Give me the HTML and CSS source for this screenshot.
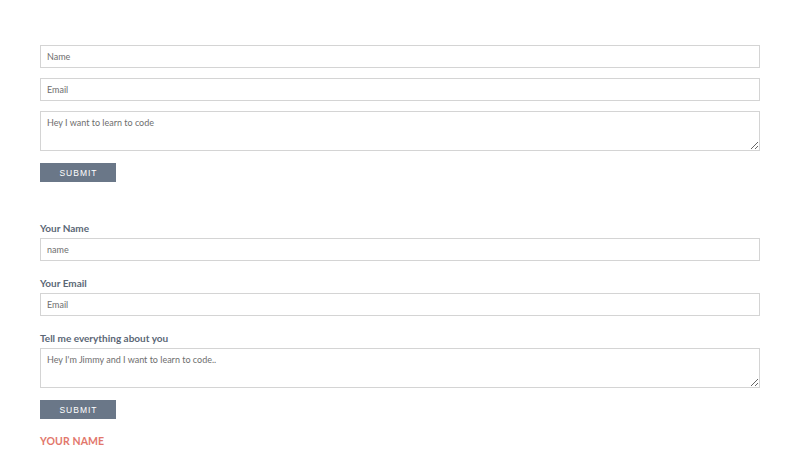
FILE: index.html
```html
<!DOCTYPE html>
<html>
<head>
<meta charset="utf-8">
<link rel="stylesheet" href="styles.css">
</head>
<body>
<div class="page">
  <form class="form form-simple">
    <input class="field" type="text" placeholder="Name">
    <input class="field" type="email" placeholder="Email">
    <textarea class="field area" placeholder="Hey I want to learn to code"></textarea>
    <button class="submit" type="button">SUBMIT</button>
  </form>

  <form class="form form-labeled">
    <div class="group">
      <label class="label">Your Name</label>
      <input class="field" type="text" placeholder="name">
    </div>
    <div class="group">
      <label class="label">Your Email</label>
      <input class="field" type="email" placeholder="Email">
    </div>
    <div class="group">
      <label class="label">Tell me everything about you</label>
      <textarea class="field area" placeholder="Hey I'm Jimmy and I want to learn to code.."></textarea>
    </div>
    <button class="submit" type="button">SUBMIT</button>
  </form>

  <h3 class="heading">YOUR NAME</h3>
</div>
</body>
</html>
```
FILE: styles.css
```css
* { box-sizing: border-box; }
html, body { margin: 0; padding: 0; background: #fff; }
body { font-family: Lato, "Open Sans", sans-serif; color: #5b6776; }
.page { padding: 45px 40px 0 40px; }
.form { display: flex; flex-direction: column; align-items: flex-start; }
.form-simple { gap: 10px; }
.form-simple .submit { margin-top: 2px; }
.form-labeled { margin-top: 39px; gap: 15px; }
.form-labeled .submit { margin-top: -3px; }
.group { display: flex; flex-direction: column; width: 100%; }
.label { font-size: 10px; font-weight: 700; line-height: 14px; margin-bottom: 3px; color: #5b6776; }
.field {
  width: 100%;
  height: 23px;
  border: 1px solid #d4d4d4;
  background: #fff;
  padding: 0 6px;
  font-family: Lato, sans-serif;
  font-size: 9px;
  color: #666;
  outline: none;
  margin: 0;
}
.field::placeholder { color: #6e6e6e; opacity: 1; }
.area { height: 40px; padding-top: 5px; resize: vertical; display: block; }
.submit {
  width: 76px;
  height: 19px;
  border: none;
  background: #6a7788;
  color: #fff;
  font-family: "Liberation Sans", Arial, sans-serif;
  font-size: 8.5px;
  letter-spacing: 1px;
  padding: 0 0 0 1px;
  margin: 0;
}
.heading {
  margin: 15px 0 0 0;
  font-size: 10.5px;
  font-weight: 700;
  line-height: 14px;
  color: #e2776c;
  letter-spacing: 0.1px;
}
```
